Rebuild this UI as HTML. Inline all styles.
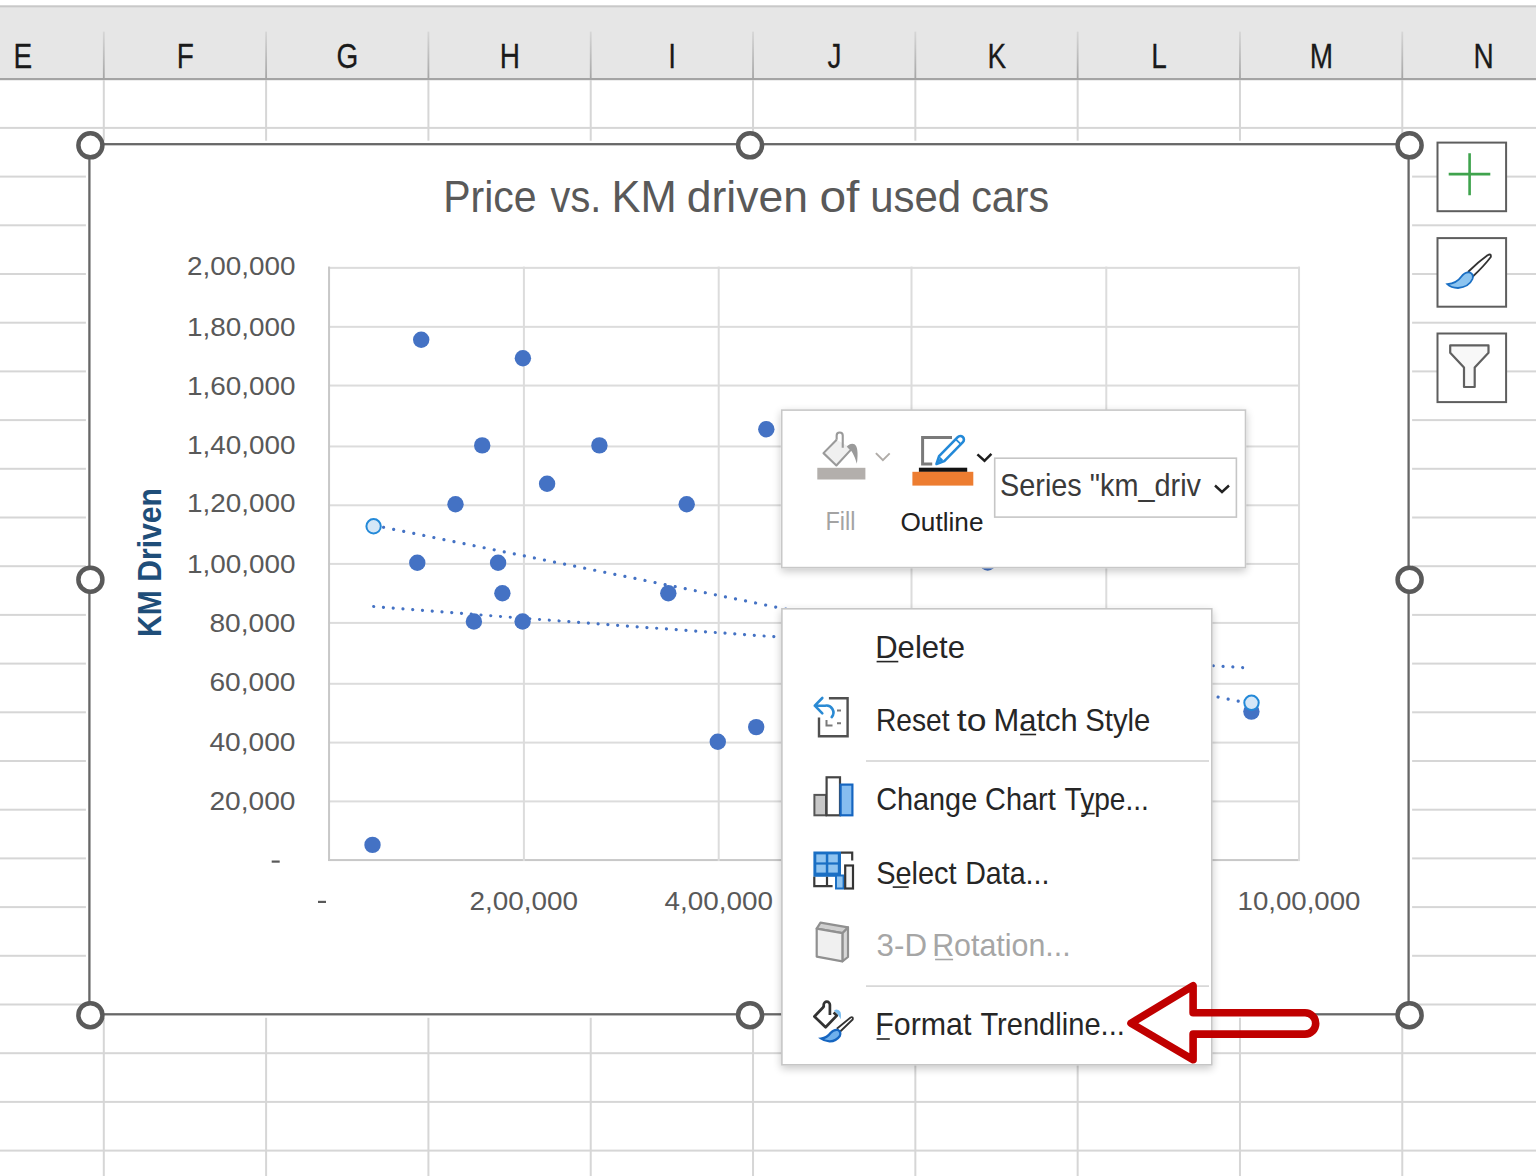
<!DOCTYPE html>
<html><head><meta charset="utf-8"><title>Excel chart</title>
<style>html,body{margin:0;padding:0;background:#fff;overflow:hidden;width:1536px;height:1176px}svg{display:block}</style>
</head><body>
<svg width="1536" height="1176" viewBox="0 0 1536 1176"><rect x="0" y="0" width="1536" height="1176" fill="#ffffff"/>
<rect x="0" y="7" width="1536" height="71.5" fill="#e6e6e6"/>
<rect x="0" y="5.3" width="1536" height="2" fill="#c8c8c8"/>
<rect x="0" y="78" width="1536" height="2.2" fill="#a4a4a4"/>
<defs><linearGradient id="hdiv" x1="0" y1="0" x2="0" y2="1"><stop offset="0" stop-color="#d6d6d6"/><stop offset="1" stop-color="#a6a6a6"/></linearGradient>
<filter id="shadow" x="-10%" y="-10%" width="120%" height="125%"><feGaussianBlur in="SourceAlpha" stdDeviation="4"/><feOffset dx="0" dy="3" result="b"/><feComponentTransfer><feFuncA type="linear" slope="0.22"/></feComponentTransfer><feMerge><feMergeNode/><feMergeNode in="SourceGraphic"/></feMerge></filter>
</defs>
<rect x="102.90" y="31.6" width="1.8" height="46.6" fill="url(#hdiv)"/>
<rect x="265.21" y="31.6" width="1.8" height="46.6" fill="url(#hdiv)"/>
<rect x="427.52" y="31.6" width="1.8" height="46.6" fill="url(#hdiv)"/>
<rect x="589.83" y="31.6" width="1.8" height="46.6" fill="url(#hdiv)"/>
<rect x="752.14" y="31.6" width="1.8" height="46.6" fill="url(#hdiv)"/>
<rect x="914.45" y="31.6" width="1.8" height="46.6" fill="url(#hdiv)"/>
<rect x="1076.76" y="31.6" width="1.8" height="46.6" fill="url(#hdiv)"/>
<rect x="1239.07" y="31.6" width="1.8" height="46.6" fill="url(#hdiv)"/>
<rect x="1401.38" y="31.6" width="1.8" height="46.6" fill="url(#hdiv)"/>
<text transform="translate(22.9 68) scale(0.8 1)" x="0" y="0" font-family='"Liberation Sans", sans-serif' font-size="35" fill="#1a1a1a" stroke="#1a1a1a" stroke-width="0.25" text-anchor="middle">E</text>
<text transform="translate(185.2 68) scale(0.8 1)" x="0" y="0" font-family='"Liberation Sans", sans-serif' font-size="35" fill="#1a1a1a" stroke="#1a1a1a" stroke-width="0.25" text-anchor="middle">F</text>
<text transform="translate(347.5 68) scale(0.8 1)" x="0" y="0" font-family='"Liberation Sans", sans-serif' font-size="35" fill="#1a1a1a" stroke="#1a1a1a" stroke-width="0.25" text-anchor="middle">G</text>
<text transform="translate(509.8 68) scale(0.8 1)" x="0" y="0" font-family='"Liberation Sans", sans-serif' font-size="35" fill="#1a1a1a" stroke="#1a1a1a" stroke-width="0.25" text-anchor="middle">H</text>
<text transform="translate(672.1 68) scale(0.8 1)" x="0" y="0" font-family='"Liberation Sans", sans-serif' font-size="35" fill="#1a1a1a" stroke="#1a1a1a" stroke-width="0.25" text-anchor="middle">I</text>
<text transform="translate(834.4 68) scale(0.8 1)" x="0" y="0" font-family='"Liberation Sans", sans-serif' font-size="35" fill="#1a1a1a" stroke="#1a1a1a" stroke-width="0.25" text-anchor="middle">J</text>
<text transform="translate(996.8 68) scale(0.8 1)" x="0" y="0" font-family='"Liberation Sans", sans-serif' font-size="35" fill="#1a1a1a" stroke="#1a1a1a" stroke-width="0.25" text-anchor="middle">K</text>
<text transform="translate(1159.1 68) scale(0.8 1)" x="0" y="0" font-family='"Liberation Sans", sans-serif' font-size="35" fill="#1a1a1a" stroke="#1a1a1a" stroke-width="0.25" text-anchor="middle">L</text>
<text transform="translate(1321.4 68) scale(0.8 1)" x="0" y="0" font-family='"Liberation Sans", sans-serif' font-size="35" fill="#1a1a1a" stroke="#1a1a1a" stroke-width="0.25" text-anchor="middle">M</text>
<text transform="translate(1483.7 68) scale(0.8 1)" x="0" y="0" font-family='"Liberation Sans", sans-serif' font-size="35" fill="#1a1a1a" stroke="#1a1a1a" stroke-width="0.25" text-anchor="middle">N</text>
<rect x="102.80" y="80" width="2" height="1096" fill="#d6d6d6"/>
<rect x="265.11" y="80" width="2" height="1096" fill="#d6d6d6"/>
<rect x="427.42" y="80" width="2" height="1096" fill="#d6d6d6"/>
<rect x="589.73" y="80" width="2" height="1096" fill="#d6d6d6"/>
<rect x="752.04" y="80" width="2" height="1096" fill="#d6d6d6"/>
<rect x="914.35" y="80" width="2" height="1096" fill="#d6d6d6"/>
<rect x="1076.66" y="80" width="2" height="1096" fill="#d6d6d6"/>
<rect x="1238.97" y="80" width="2" height="1096" fill="#d6d6d6"/>
<rect x="1401.28" y="80" width="2" height="1096" fill="#d6d6d6"/>
<rect x="0" y="126.90" width="1536" height="2" fill="#d6d6d6"/>
<rect x="0" y="175.60" width="1536" height="2" fill="#d6d6d6"/>
<rect x="0" y="224.30" width="1536" height="2" fill="#d6d6d6"/>
<rect x="0" y="273.00" width="1536" height="2" fill="#d6d6d6"/>
<rect x="0" y="321.70" width="1536" height="2" fill="#d6d6d6"/>
<rect x="0" y="370.40" width="1536" height="2" fill="#d6d6d6"/>
<rect x="0" y="419.10" width="1536" height="2" fill="#d6d6d6"/>
<rect x="0" y="467.80" width="1536" height="2" fill="#d6d6d6"/>
<rect x="0" y="516.50" width="1536" height="2" fill="#d6d6d6"/>
<rect x="0" y="565.20" width="1536" height="2" fill="#d6d6d6"/>
<rect x="0" y="613.90" width="1536" height="2" fill="#d6d6d6"/>
<rect x="0" y="662.60" width="1536" height="2" fill="#d6d6d6"/>
<rect x="0" y="711.30" width="1536" height="2" fill="#d6d6d6"/>
<rect x="0" y="760.00" width="1536" height="2" fill="#d6d6d6"/>
<rect x="0" y="808.70" width="1536" height="2" fill="#d6d6d6"/>
<rect x="0" y="857.40" width="1536" height="2" fill="#d6d6d6"/>
<rect x="0" y="906.10" width="1536" height="2" fill="#d6d6d6"/>
<rect x="0" y="954.80" width="1536" height="2" fill="#d6d6d6"/>
<rect x="0" y="1003.50" width="1536" height="2" fill="#d6d6d6"/>
<rect x="0" y="1052.20" width="1536" height="2" fill="#d6d6d6"/>
<rect x="0" y="1100.90" width="1536" height="2" fill="#d6d6d6"/>
<rect x="0" y="1149.60" width="1536" height="2" fill="#d6d6d6"/>
<rect x="89.4" y="144.2" width="1319.2" height="870.1" fill="#ffffff" stroke="#ffffff" stroke-width="7"/>
<rect x="89.4" y="144.2" width="1319.2" height="870.1" fill="#ffffff" stroke="#676767" stroke-width="2.3"/>
<text x="443.20" y="212" font-family='"Liberation Sans", sans-serif' font-size="43.5" fill="#595959" textLength="93.40" lengthAdjust="spacingAndGlyphs">Price</text>
<text x="550.60" y="212" font-family='"Liberation Sans", sans-serif' font-size="43.5" fill="#595959" textLength="50.60" lengthAdjust="spacingAndGlyphs">vs.</text>
<text x="611.40" y="212" font-family='"Liberation Sans", sans-serif' font-size="43.5" fill="#595959" textLength="65.20" lengthAdjust="spacingAndGlyphs">KM</text>
<text x="686.80" y="212" font-family='"Liberation Sans", sans-serif' font-size="43.5" fill="#595959" textLength="121.20" lengthAdjust="spacingAndGlyphs">driven</text>
<text x="819.40" y="212" font-family='"Liberation Sans", sans-serif' font-size="43.5" fill="#595959" textLength="40.00" lengthAdjust="spacingAndGlyphs">of</text>
<text x="870.20" y="212" font-family='"Liberation Sans", sans-serif' font-size="43.5" fill="#595959" textLength="91.00" lengthAdjust="spacingAndGlyphs">used</text>
<text x="971.20" y="212" font-family='"Liberation Sans", sans-serif' font-size="43.5" fill="#595959" textLength="78.00" lengthAdjust="spacingAndGlyphs">cars</text>
<text transform="translate(161.2 637.0) rotate(-90)" x="0" y="0" font-family='"Liberation Sans", sans-serif' font-size="33.5" font-weight="bold" fill="#1f4e79" textLength="149" lengthAdjust="spacingAndGlyphs">KM Driven</text>
<rect x="328.20" y="266.86" width="971.80" height="2" fill="#dcdcdc"/>
<rect x="328.20" y="325.84" width="971.80" height="2" fill="#dcdcdc"/>
<rect x="328.20" y="384.56" width="971.80" height="2" fill="#dcdcdc"/>
<rect x="328.20" y="445.45" width="971.80" height="2" fill="#dcdcdc"/>
<rect x="328.20" y="504.30" width="971.80" height="2" fill="#dcdcdc"/>
<rect x="328.20" y="562.90" width="971.80" height="2" fill="#dcdcdc"/>
<rect x="328.20" y="621.90" width="971.80" height="2" fill="#dcdcdc"/>
<rect x="328.20" y="682.80" width="971.80" height="2" fill="#dcdcdc"/>
<rect x="328.20" y="741.60" width="971.80" height="2" fill="#dcdcdc"/>
<rect x="328.20" y="800.40" width="971.80" height="2" fill="#dcdcdc"/>
<rect x="328.20" y="859.07" width="971.80" height="2" fill="#c8c8c8"/>
<rect x="328.05" y="266.60" width="2" height="594.40" fill="#c8c8c8"/>
<rect x="522.90" y="266.60" width="2" height="594.40" fill="#dcdcdc"/>
<rect x="717.70" y="266.60" width="2" height="594.40" fill="#dcdcdc"/>
<rect x="910.50" y="266.60" width="2" height="594.40" fill="#dcdcdc"/>
<rect x="1105.30" y="266.60" width="2" height="594.40" fill="#dcdcdc"/>
<rect x="1298.05" y="266.60" width="2" height="594.40" fill="#dcdcdc"/>
<text x="187.0" y="275.0" font-family='"Liberation Sans", sans-serif' font-size="25" fill="#595959" textLength="108.5" lengthAdjust="spacingAndGlyphs">2,00,000</text>
<text x="187.0" y="335.7" font-family='"Liberation Sans", sans-serif' font-size="25" fill="#595959" textLength="108.5" lengthAdjust="spacingAndGlyphs">1,80,000</text>
<text x="187.0" y="394.5" font-family='"Liberation Sans", sans-serif' font-size="25" fill="#595959" textLength="108.5" lengthAdjust="spacingAndGlyphs">1,60,000</text>
<text x="187.0" y="454.0" font-family='"Liberation Sans", sans-serif' font-size="25" fill="#595959" textLength="108.5" lengthAdjust="spacingAndGlyphs">1,40,000</text>
<text x="187.0" y="511.9" font-family='"Liberation Sans", sans-serif' font-size="25" fill="#595959" textLength="108.5" lengthAdjust="spacingAndGlyphs">1,20,000</text>
<text x="187.0" y="572.9" font-family='"Liberation Sans", sans-serif' font-size="25" fill="#595959" textLength="108.5" lengthAdjust="spacingAndGlyphs">1,00,000</text>
<text x="209.4" y="632.1" font-family='"Liberation Sans", sans-serif' font-size="25" fill="#595959" textLength="86.1" lengthAdjust="spacingAndGlyphs">80,000</text>
<text x="209.4" y="691.2" font-family='"Liberation Sans", sans-serif' font-size="25" fill="#595959" textLength="86.1" lengthAdjust="spacingAndGlyphs">60,000</text>
<text x="209.4" y="750.7" font-family='"Liberation Sans", sans-serif' font-size="25" fill="#595959" textLength="86.1" lengthAdjust="spacingAndGlyphs">40,000</text>
<text x="209.4" y="810.2" font-family='"Liberation Sans", sans-serif' font-size="25" fill="#595959" textLength="86.1" lengthAdjust="spacingAndGlyphs">20,000</text>
<rect x="271.7" y="860.5" width="8" height="2.2" fill="#595959"/>
<text x="469.6" y="909.7" font-family='"Liberation Sans", sans-serif' font-size="25" fill="#595959" textLength="108.5" lengthAdjust="spacingAndGlyphs">2,00,000</text>
<text x="664.5" y="909.7" font-family='"Liberation Sans", sans-serif' font-size="25" fill="#595959" textLength="108.5" lengthAdjust="spacingAndGlyphs">4,00,000</text>
<text x="857.2" y="909.7" font-family='"Liberation Sans", sans-serif' font-size="25" fill="#595959" textLength="108.5" lengthAdjust="spacingAndGlyphs">6,00,000</text>
<text x="1052.0" y="909.7" font-family='"Liberation Sans", sans-serif' font-size="25" fill="#595959" textLength="108.5" lengthAdjust="spacingAndGlyphs">8,00,000</text>
<text x="1237.5" y="909.7" font-family='"Liberation Sans", sans-serif' font-size="25" fill="#595959" textLength="123.0" lengthAdjust="spacingAndGlyphs">10,00,000</text>
<rect x="318" y="900.8" width="8" height="2.2" fill="#595959"/>
<polyline points="1242.6,667.53 1240.0,667.37 1230.0,666.76 1220.0,666.15 1210.0,665.53 1200.0,664.92 1190.0,664.30 1180.0,663.68 1170.0,663.05 1160.0,662.43 1150.0,661.80 1140.0,661.17 1130.0,660.54 1120.0,659.91 1110.0,659.27 1100.0,658.63 1090.0,657.99 1080.0,657.35 1070.0,656.71 1060.0,656.06 1050.0,655.42 1040.0,654.77 1030.0,654.12 1020.0,653.46 1010.0,652.81 1000.0,652.15 990.0,651.49 980.0,650.83 970.0,650.16 960.0,649.50 950.0,648.83 940.0,648.16 930.0,647.48 920.0,646.81 910.0,646.13 900.0,645.45 890.0,644.77 880.0,644.09 870.0,643.40 860.0,642.72 850.0,642.03 840.0,641.33 830.0,640.64 820.0,639.94 810.0,639.24 800.0,638.54 790.0,637.84 780.0,637.13 770.0,636.43 760.0,635.72 750.0,635.01 740.0,634.29 730.0,633.57 720.0,632.86 710.0,632.13 700.0,631.41 690.0,630.68 680.0,629.96 670.0,629.23 660.0,628.49 650.0,627.76 640.0,627.02 630.0,626.28 620.0,625.54 610.0,624.80 600.0,624.05 590.0,623.30 580.0,622.55 570.0,621.79 560.0,621.04 550.0,620.28 540.0,619.52 530.0,618.75 520.0,617.99 510.0,617.22 500.0,616.45 490.0,615.68 480.0,614.90 470.0,614.12 460.0,613.34 450.0,612.56 440.0,611.77 430.0,610.98 420.0,610.19 410.0,609.40 400.0,608.60 390.0,607.81 380.0,607.01 373.7,606.50" fill="none" stroke="#4472c4" stroke-width="3.2" stroke-linecap="round" stroke-dasharray="0.01 9.777"/>
<line x1="383.6" y1="527.3" x2="1240" y2="701.5" stroke="#4472c4" stroke-width="3.2" stroke-linecap="round" stroke-dasharray="0.01 10.25"/>
<circle cx="421.2" cy="339.8" r="8.2" fill="#4472c4"/>
<circle cx="522.9" cy="358.2" r="8.2" fill="#4472c4"/>
<circle cx="482.2" cy="445.4" r="8.2" fill="#4472c4"/>
<circle cx="599.4" cy="445.4" r="8.2" fill="#4472c4"/>
<circle cx="766.3" cy="429.2" r="8.2" fill="#4472c4"/>
<circle cx="547.1" cy="483.7" r="8.2" fill="#4472c4"/>
<circle cx="455.5" cy="504.2" r="8.2" fill="#4472c4"/>
<circle cx="686.7" cy="504.2" r="8.2" fill="#4472c4"/>
<circle cx="417.3" cy="562.7" r="8.2" fill="#4472c4"/>
<circle cx="498.1" cy="562.7" r="8.2" fill="#4472c4"/>
<circle cx="502.4" cy="593.3" r="8.2" fill="#4472c4"/>
<circle cx="668.3" cy="593.3" r="8.2" fill="#4472c4"/>
<circle cx="473.9" cy="621.5" r="8.2" fill="#4472c4"/>
<circle cx="522.6" cy="621.5" r="8.2" fill="#4472c4"/>
<circle cx="372.5" cy="844.9" r="8.2" fill="#4472c4"/>
<circle cx="717.8" cy="741.8" r="8.2" fill="#4472c4"/>
<circle cx="756.2" cy="727.1" r="8.2" fill="#4472c4"/>
<circle cx="1251.4" cy="711.6" r="8.2" fill="#4472c4"/>
<circle cx="987.7" cy="562.5" r="8.2" fill="#4472c4"/>
<circle cx="373.6" cy="526.3" r="7.2" fill="#d5e7f7" stroke="#2389d8" stroke-width="2"/>
<circle cx="1251.5" cy="702.8" r="7.2" fill="#d5e7f7" stroke="#2389d8" stroke-width="2"/>
<circle cx="90.4" cy="145.3" r="12" fill="#ffffff" stroke="#5a5a5a" stroke-width="4.5"/>
<circle cx="750.1" cy="145.3" r="12" fill="#ffffff" stroke="#5a5a5a" stroke-width="4.5"/>
<circle cx="1409.6" cy="145.3" r="12" fill="#ffffff" stroke="#5a5a5a" stroke-width="4.5"/>
<circle cx="90.4" cy="579.7" r="12" fill="#ffffff" stroke="#5a5a5a" stroke-width="4.5"/>
<circle cx="1409.6" cy="579.7" r="12" fill="#ffffff" stroke="#5a5a5a" stroke-width="4.5"/>
<circle cx="90.4" cy="1015.2" r="12" fill="#ffffff" stroke="#5a5a5a" stroke-width="4.5"/>
<circle cx="750.1" cy="1015.2" r="12" fill="#ffffff" stroke="#5a5a5a" stroke-width="4.5"/>
<circle cx="1409.6" cy="1015.2" r="12" fill="#ffffff" stroke="#5a5a5a" stroke-width="4.5"/>
<rect x="1437.5" y="142.6" width="68.6" height="68.6" fill="#ffffff" stroke="#5e5e5e" stroke-width="2"/>
<rect x="1437.5" y="238.1" width="68.6" height="68.6" fill="#ffffff" stroke="#5e5e5e" stroke-width="2"/>
<rect x="1437.5" y="333.5" width="68.6" height="68.6" fill="#ffffff" stroke="#5e5e5e" stroke-width="2"/>
<path d="M1448.7 174.1H1490.3M1469.6 153.2V195.3" stroke="#3fa34d" stroke-width="2.6" fill="none"/>
<path d="M1468.5 271.5 Q1478 262 1487.5 255.2 Q1491.5 253.2 1490.8 257 Q1484 266 1472.8 276.5 Z" fill="#ffffff" stroke="#333" stroke-width="1.8" stroke-linejoin="round"/>
<path d="M1447.3 284.2 Q1457 283 1461 277 Q1465 271.5 1470 272.5 Q1474 274.5 1472.5 279 Q1469 287 1458 288 Q1451 288 1447.3 284.2Z" fill="#8cc4f0" stroke="#1a6fc4" stroke-width="1.8"/>
<path d="M1450.2 345.4H1488.5V352.7L1474.7 367.4V387H1464V367.4L1450.2 352.7Z" fill="#f8f8f8" stroke="#606060" stroke-width="2.2" stroke-linejoin="round"/>
<g filter="url(#shadow)"><rect x="781.7" y="410.1" width="463.8" height="157.5" fill="#ffffff" stroke="#c8c8c8" stroke-width="1.6"/></g>
<rect x="817.3" y="467.8" width="48.1" height="11.7" fill="#b3afac"/>
<path d="M836.65 439.65 L823.47 453.12 L836.36 465.42 L851 449.6 L847.5 446.1" fill="#f0f0f0" stroke="#9a9a9a" stroke-width="2.1" stroke-linejoin="round"/>
<path d="M836.65 439.65 V435.6 A3.05 3.05 0 0 1 842.75 435.6 V447.8" fill="none" stroke="#9a9a9a" stroke-width="2.1"/>
<path d="M847.5 446.1 Q851 442.5 854.5 444.3 Q859 447 856.9 463.7 Q853.5 452 847.5 446.1Z" fill="#9a9a9a"/>
<path d="M875.9 453.1 L882.9 460.1 L889.7 453.4" fill="none" stroke="#b0aca8" stroke-width="2"/>
<text x="825.5" y="530" font-family='"Liberation Sans", sans-serif' font-size="26" fill="#a3a3a3" textLength="30" lengthAdjust="spacingAndGlyphs">Fill</text>
<path d="M952 437.4 H922.6 V464 H932.2" fill="none" stroke="#7a7a7a" stroke-width="3"/>
<path d="M936.5 464 L939.1 456.1 L957.7 437.1 A3.6 3.6 0 0 1 962.9 442.1 L944.3 461.1 Z" fill="#ffffff" stroke="#2389d8" stroke-width="2.6" stroke-linejoin="round"/>
<path d="M955.6 439.2 L960.8 444.2" stroke="#2389d8" stroke-width="1.8"/>
<path d="M937.6 462.8 L940.3 457 L943.5 460.2 Z" fill="#2389d8"/>
<rect x="918.9" y="467.7" width="48.3" height="4.2" fill="#121212"/>
<rect x="912.4" y="471.8" width="60.9" height="13.8" fill="#ed7d31"/>
<path d="M977.4 454.4 L984.5 460.8 L991.4 453.8" fill="none" stroke="#1e1e1e" stroke-width="2.5"/>
<text x="900.5" y="530.6" font-family='"Liberation Sans", sans-serif' font-size="26" fill="#222222" textLength="83" lengthAdjust="spacingAndGlyphs">Outline</text>
<rect x="994.7" y="458.2" width="241.7" height="58.9" fill="#ffffff" stroke="#c6c6c6" stroke-width="1.6"/>
<text x="1000" y="496.3" font-family='"Liberation Sans", sans-serif' font-size="32" fill="#3a3a3a" textLength="201" lengthAdjust="spacingAndGlyphs">Series "km_driv</text>
<path d="M1215 485.5 L1222 492 L1229 485.5" fill="none" stroke="#222" stroke-width="2.4"/>
<g filter="url(#shadow)"><rect x="781.9" y="608.8" width="429.9" height="456" fill="#ffffff" stroke="#c6c6c6" stroke-width="1.6"/></g>
<rect x="866" y="760.2" width="343" height="1.6" fill="#d4d4d4"/>
<rect x="866" y="985.3" width="343" height="1.6" fill="#d4d4d4"/>
<text x="875.20" y="658.2" font-family='"Liberation Sans", sans-serif' font-size="32" font-weight="400" fill="#262626" textLength="89.80" lengthAdjust="spacingAndGlyphs">Delete</text>
<text x="875.90" y="730.8" font-family='"Liberation Sans", sans-serif' font-size="32" font-weight="400" fill="#262626" textLength="73.60" lengthAdjust="spacingAndGlyphs">Reset</text>
<text x="956.80" y="730.8" font-family='"Liberation Sans", sans-serif' font-size="32" font-weight="400" fill="#262626" textLength="29.60" lengthAdjust="spacingAndGlyphs">to</text>
<text x="993.50" y="730.8" font-family='"Liberation Sans", sans-serif' font-size="32" font-weight="400" fill="#262626" textLength="84.20" lengthAdjust="spacingAndGlyphs">Match</text>
<text x="1085.20" y="730.8" font-family='"Liberation Sans", sans-serif' font-size="32" font-weight="400" fill="#262626" textLength="65.20" lengthAdjust="spacingAndGlyphs">Style</text>
<text x="876.20" y="810.2" font-family='"Liberation Sans", sans-serif' font-size="32" font-weight="400" fill="#262626" textLength="101.00" lengthAdjust="spacingAndGlyphs">Change</text>
<text x="985.10" y="810.2" font-family='"Liberation Sans", sans-serif' font-size="32" font-weight="400" fill="#262626" textLength="70.60" lengthAdjust="spacingAndGlyphs">Chart</text>
<text x="1064.50" y="810.2" font-family='"Liberation Sans", sans-serif' font-size="32" font-weight="400" fill="#262626" textLength="84.40" lengthAdjust="spacingAndGlyphs">Type...</text>
<text x="876.20" y="883.7" font-family='"Liberation Sans", sans-serif' font-size="32" font-weight="400" fill="#262626" textLength="80.40" lengthAdjust="spacingAndGlyphs">Select</text>
<text x="965.20" y="883.7" font-family='"Liberation Sans", sans-serif' font-size="32" font-weight="400" fill="#262626" textLength="84.20" lengthAdjust="spacingAndGlyphs">Data...</text>
<text x="876.60" y="955.8" font-family='"Liberation Sans", sans-serif' font-size="32" font-weight="400" fill="#a6a6a6" textLength="50.40" lengthAdjust="spacingAndGlyphs">3-D</text>
<text x="932.20" y="955.8" font-family='"Liberation Sans", sans-serif' font-size="32" font-weight="400" fill="#a6a6a6" textLength="138.40" lengthAdjust="spacingAndGlyphs">Rotation...</text>
<text x="875.20" y="1035.2" font-family='"Liberation Sans", sans-serif' font-size="32" font-weight="400" fill="#262626" textLength="96.20" lengthAdjust="spacingAndGlyphs">Format</text>
<text x="980.40" y="1035.2" font-family='"Liberation Sans", sans-serif' font-size="32" font-weight="400" fill="#262626" textLength="144.40" lengthAdjust="spacingAndGlyphs">Trendline...</text>
<rect x="876.6" y="660.8" width="21.7" height="1.6" fill="#262626"/>
<rect x="1020.1" y="733.7" width="16.0" height="1.6" fill="#262626"/>
<rect x="1081.4" y="812.8" width="13.3" height="1.6" fill="#262626"/>
<rect x="892.7" y="886.3" width="16.0" height="1.6" fill="#262626"/>
<rect x="935.1" y="958.7" width="18.0" height="1.6" fill="#a6a6a6"/>
<rect x="876.6" y="1038.2" width="13.2" height="1.6" fill="#262626"/>
<path d="M828.9 698.2 H847.6 V736.3 H819 V717.6" fill="none" stroke="#505050" stroke-width="2.4"/>
<path d="M822.3 698 L814.8 705.7 L822.3 713.4 M814.8 705.7 H825 A7 7 0 0 1 831.7 717.1" fill="none" stroke="#2a8ad4" stroke-width="2.6" stroke-linecap="round" stroke-linejoin="round"/>
<path d="M837 710.6 H841 M837 723.2 H841 M826.5 720 V725.5 H832.5" fill="none" stroke="#7a7a7a" stroke-width="2"/>
<rect x="814.4" y="794.9" width="11.6" height="20.4" fill="#c8c8c8" stroke="#555" stroke-width="2"/>
<rect x="826.6" y="777.3" width="13.4" height="38" fill="#ffffff" stroke="#444" stroke-width="2.2"/>
<rect x="840.6" y="784.6" width="11.8" height="30.7" fill="#86bdf0" stroke="#1565c0" stroke-width="2.2"/>
<rect x="813.4" y="851.5" width="27.6" height="25.3" fill="#1a6fc4"/>
<rect x="816.3" y="854.4" width="9.5" height="8" fill="#90c4f0"/>
<rect x="828.3" y="854.4" width="9.5" height="8" fill="#90c4f0"/>
<rect x="816.3" y="864.6" width="9.5" height="8" fill="#90c4f0"/>
<rect x="828.3" y="864.6" width="9.5" height="8" fill="#90c4f0"/>
<path d="M841 852.6 H852.2 V860.4 M814.3 876.8 V886.2 H832.6 M827 876.8 V886.2" fill="none" stroke="#3a3a3a" stroke-width="2.2"/>
<rect x="836" y="875.5" width="7.6" height="13" fill="#90c4f0" stroke="#1a6fc4" stroke-width="2"/>
<rect x="845.2" y="865.5" width="7.8" height="23" fill="#f4f4f4" stroke="#333" stroke-width="2.2"/>
<path d="M816.7 928.6 L820.5 922.7 L848 927.4 L842.4 933.2 Z" fill="#d0d0d0" stroke="#909090" stroke-width="2.2" stroke-linejoin="round"/>
<path d="M842.4 933.2 L848 927.4 L848 957 L842.4 961.3 Z" fill="#d8d8d8" stroke="#909090" stroke-width="2.2" stroke-linejoin="round"/>
<path d="M816.7 928.6 L842.4 933.2 L842.4 961.3 L816.7 956.6 Z" fill="#f0f0f0" stroke="#909090" stroke-width="2.2" stroke-linejoin="round"/>
<path d="M823.7 1006.7 L814.4 1016.5 L825.6 1027.3 L836.8 1015.6 L833.6 1012.6" fill="#ffffff" stroke="#333" stroke-width="2.7" stroke-linejoin="round"/>
<path d="M823.7 1007.5 V1004.8 A3.1 3.1 0 0 1 829.9 1004.8 V1015.1" fill="none" stroke="#333" stroke-width="2.7"/>
<path d="M834 1010.4 Q838 1008 840.5 1012 Q841.5 1016 840.5 1019.3 Q838.5 1014 834 1010.4Z" fill="#7bbef0"/>
<path d="M836.8 1028.7 L850.5 1017.5 Q853.5 1016.5 852.7 1019.5 L839.7 1032" fill="#ffffff" stroke="#333" stroke-width="1.8"/>
<path d="M820.9 1038.5 Q827 1038 830.5 1033 Q834 1029 838 1030 Q841.5 1032 839.8 1036 Q836 1041.5 829.5 1041.3 Q824 1041 820.9 1038.5Z" fill="#6fb0ec" stroke="#1565c0" stroke-width="2.2"/>
<path d="M1131 1023.2 L1193.1 985.8 V1012.7 H1305 A10.7 10.7 0 0 1 1305 1034.1 H1193.1 V1059.8 Z" fill="none" stroke="#c00000" stroke-width="7.6" stroke-linejoin="round"/></svg>
</body></html>
